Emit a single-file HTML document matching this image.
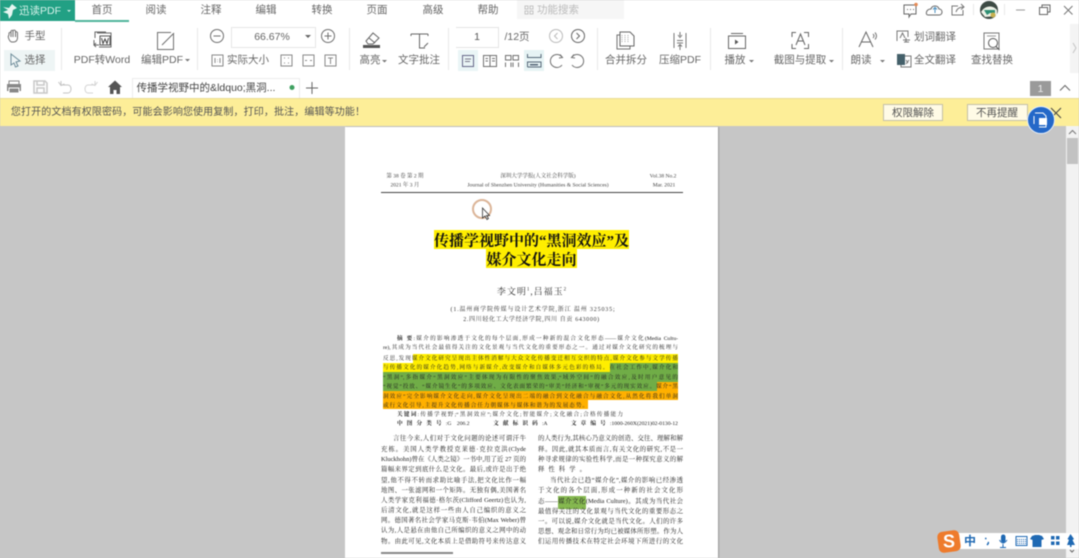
<!DOCTYPE html>
<html lang="zh"><head><meta charset="utf-8"><title>迅读PDF</title>
<style>
html,body{margin:0;padding:0;width:1079px;height:558px;overflow:hidden;background:#c6c6c6}
#w{position:absolute;left:0;top:0;width:1079px;height:558px;overflow:hidden;background:#c6c6c6;filter:blur(.45px);font-family:"Liberation Sans","Noto Sans CJK SC",sans-serif}
.b{position:absolute}
.t{position:absolute;white-space:nowrap;transform:translate(-50%,-50%);font-size:10.5px;color:#666;line-height:1}
.l{position:absolute;font-family:"Liberation Serif","Noto Serif CJK SC",serif;white-space:nowrap;overflow:hidden;text-align:justify;text-align-last:justify;color:#222;line-height:10px;height:10px}
.a{font-size:5.6px}
.c{font-size:6.4px}
.h{position:absolute;white-space:nowrap;transform:translate(-50%,-50%);font-family:"Liberation Serif","Noto Serif CJK SC",serif;color:#444;font-size:5.5px;line-height:1}
svg{position:absolute;left:0;top:0}
</style></head><body><div id="w">
<!-- chrome backgrounds -->
<div class="b" style="left:0;top:0;width:1079px;height:98px;background:#fff"></div>
<div class="b" style="left:0;top:0;width:75px;height:21px;background:#22a084"></div>
<div class="b" style="left:75px;top:20px;width:54px;height:2px;background:#4fb49c"></div>
<div class="b" style="left:517px;top:0;width:107px;height:19px;background:#f6f6f6"></div>
<div class="b" style="left:4px;top:50px;width:51px;height:21px;background:#eef5f5"></div>
<div class="b" style="left:458px;top:50px;width:20px;height:21px;background:#eaf5f6"></div>
<div class="b" style="left:524px;top:50px;width:20px;height:21px;background:#e6f3f4"></div>
<div class="b" style="left:1070px;top:24px;width:9px;height:49px;background:#f4f4f4"></div>
<div class="b" style="left:231px;top:27px;width:83px;height:19px;border:1px solid #e6e6e6"></div>
<div class="b" style="left:456px;top:27px;width:42px;height:19px;border-top:1px solid #e4e4e4;border-bottom:1px solid #e4e4e4;border-right:1px solid #e4e4e4"></div>
<div class="b" style="left:132px;top:78px;width:168px;height:20px;background:#fff;border:1px solid #ececec;border-bottom:none;box-sizing:border-box"></div>
<div class="b" style="left:1030px;top:81px;width:21px;height:15px;background:#9a9a9a"></div>
<div class="b" style="left:0;top:98px;width:1079px;height:28px;background:#fdee98;border-top:1px solid #e9dc96;box-sizing:border-box"></div>
<div class="b" style="left:883px;top:104px;width:60px;height:17px;background:#fffbe6;border:1px solid #c4c0a8;box-sizing:border-box"></div>
<div class="b" style="left:967px;top:104px;width:61px;height:17px;background:#fffbe6;border:1px solid #c4c0a8;box-sizing:border-box"></div>

<!-- separators and icons -->
<svg width="1079" height="126" viewBox="0 0 1079 126" fill="none" stroke="#707070" stroke-width="1">
<g stroke="#e8e8e8"><path d="M61.5 28V70M197.5 28V70M349.5 28V70M448.5 28V70M597.5 28V70M710.5 28V70M842.5 28V70M1004.5 4V15M973.5 4V15" /></g>
<!-- logo -->
<path d="M3 7L9 8L12 4L17 8L13 10L12 15L9 19L8 14L3 12L8 10Z" fill="#e6f6f1" stroke="none"/>
<path d="M67 10h4l-2 2z" fill="#cfeee6" stroke="none"/>
<!-- hand -->
<path d="M10 41C8 38 8 36 9 35V33C10 32 11 32 11 33V31C12 30 13 30 13 31V30.5C14 30 15 30 15.5 31V32C16.5 31.5 17.5 32 17.5 33V38C17.5 40 16 42 14 42H11.5Z"/><path d="M11 33V37M13 31V37M15.5 31V37"/>
<!-- arrow -->
<path d="M11 54L20 61L16 62L18 66L15.5 67L14 63L11 65Z" stroke="#6f8d9a"/>
<!-- pdf to word -->
<path d="M97 33H111V47H99" stroke="#666"/><path d="M95 38V32H106M94 40V45H99M96 43L94 45L96 47" stroke="#666"/>
<rect x="100" y="36" width="10" height="9" fill="#fff" stroke="#555"/>
<path d="M101.5 38L103 43.5L105 39L107 43.5L108.5 38" stroke="#444"/>
<!-- edit pdf -->
<path d="M173.5 34V49.5H157.5V32.5H171M162 45L174 33"/>
<path d="M185 59h5l-2.5 2.5z" fill="#777" stroke="none"/>
<!-- zoom -->
<circle cx="217" cy="36" r="6.5"/><path d="M213.5 36H220.5"/>
<circle cx="328" cy="36" r="6.5"/><path d="M324.5 36H331.5M328 32.5V39.5"/>
<path d="M305 35h6l-3 3z" fill="#666" stroke="none"/>
<!-- fit -->
<rect x="212" y="55" width="11" height="11" stroke="#888"/><path d="M215 58V63M220 58V63M217.5 59.5V60M217.5 61.5V62" stroke="#888"/>
<rect x="281" y="55" width="11" height="11" stroke="#888"/><path d="M284 58h1M288 58h1M284 63h1M288 63h1" stroke="#888"/>
<rect x="303" y="55" width="11" height="11" stroke="#888"/><path d="M305 60.5h2M310 60.5h2" stroke="#888"/>
<rect x="325" y="55" width="11" height="11" stroke="#888"/><path d="M328 58H333M330.5 58V64" stroke="#888"/>
<!-- highlight -->
<path d="M366 41L373 33L379 38L373 44H368Z" stroke="#666"/><path d="M369 38L375 43" stroke="#666"/>
<rect x="363" y="45" width="17" height="3" fill="#555" stroke="none"/>
<path d="M382 60h5l-2.5 2.5z" fill="#777" stroke="none"/>
<!-- text note -->
<path d="M411 34H428M419.5 34V48H425M411 34V36M428 34V36M424 47L428 43" stroke="#666"/>
<!-- page prev next -->
<circle cx="556" cy="36" r="6.5" stroke="#bbb"/><path d="M557.5 33L554.5 36L557.5 39" stroke="#bbb"/>
<circle cx="578" cy="36" r="6.5" stroke="#666"/><path d="M576.5 33L579.5 36L576.5 39" stroke="#666"/>
<!-- views -->
<rect x="462.5" y="55.5" width="11" height="11" stroke="#668"/><path d="M465 59H471M465 61.5H470" stroke="#778"/>
<rect x="483.5" y="55.5" width="13" height="11"/><path d="M490 55.5V66.5M485.5 58.5H488M492 58.5H495M485.5 61H488M492 61H495"/>
<path d="M505.5 55.5H511V60H505.5ZM513 55.5H518.5V60H513ZM505.5 62.5V67M511 62.5V67M513 62.5V67M518.5 62.5V67"/>
<path d="M527.5 54V57.5H541V54M527.5 67V62H541V67H527.5M531 64.5H537" stroke="#567"/><path d="M530 64h8v1.500h-8z" fill="#567" stroke="none"/>
<path d="M562 57A6.5 6.5 0 1 0 562 65"/><path d="M560 54.5L562.5 57.5L559 58"/>
<path d="M572 57A6.5 6.5 0 1 1 572 65"/><path d="M574 54.5L571.5 57.5L575 58"/>
<!-- merge -->
<path d="M620 35H617V49H630V46" /><path d="M620 35V32H630L634 36V46H620Z" stroke="#666"/><path d="M622 35V43M625 35V43M628 35V43" stroke="#aaa" stroke-dasharray="1 1"/>
<!-- compress -->
<path d="M674 33V48M686 33V48M680 32V36M680 45V50M677 40.5H683M677 43H683" stroke="#777"/><path d="M678 35L680 37.5L682 35M678 46.5L680 44.5L682 46.5" stroke="#777"/>
<!-- play -->
<rect x="728.5" y="36" width="17" height="12.5" stroke="#666"/><path d="M731 33.5H743" stroke="#666"/><path d="M735 39.5l3.500 2.500l-3.500 2.500z" fill="#555" stroke="none"/>
<path d="M749 60h5l-2.5 2.500z" fill="#777" stroke="none"/>
<!-- screenshot -->
<path d="M792 37V32.500H796M804 32.500H808.500V37M792 44V48.500H796M804 48.500H808.500V44" stroke="#666"/>
<path d="M796 45L800.500 34L805 45M797.500 41H803.500" stroke="#666"/>
<path d="M829 60h5l-2.500 2.500z" fill="#777" stroke="none"/>
<!-- read aloud -->
<path d="M859 47L866 32L873 47M861.500 42H870.500" stroke="#666"/><path d="M873 34Q875 36 873 38M875 32.500Q878 36 875 39.500" stroke="#777"/>
<path d="M880 60h5l-2.500 2.500z" fill="#777" stroke="none"/>
<!-- translate -->
<path d="M897 41V31H908V37" stroke="#777"/><path d="M900 38L902.500 33L905 38" stroke="#777"/><path d="M906 38V42M903 40H910M904 42H909" stroke="#777"/>
<rect x="897" y="54" width="8" height="11" fill="#44606a" stroke="none"/>
<path d="M905 56H911V67H901V65M906 60L908 63M909 60L906 64" stroke="#777"/>
<!-- find -->
<path d="M984 33H999V49H984Z" stroke="#777"/><path d="M987 36H996" stroke="#999"/><circle cx="993" cy="43" r="4.500" stroke="#555"/><path d="M996 46.500L999.500 50" stroke="#555"/>
<path d="M1073 43L1076 48L1073 53" stroke="#c4c4c4"/>
<!-- top right -->
<path d="M904 5H916V14H911L909 17V14H904Z" stroke="#666"/><path d="M907 9.500h1M910 9.500h1M913 9.500h1" stroke="#666"/><circle cx="916" cy="4.500" r="1.800" fill="#e58a55" stroke="none"/>
<path d="M928 15H939C943 15 943 9 939 9C938 5 932 5 931 9C926 9 925 15 928 15Z" stroke="#666"/><path d="M935 13V8M933 9.500L935 7.500L937 9.500" stroke="#4a90c0"/>
<path d="M958 6H952V15H963V10M956 12C957 8 960 7 964 7M961 4L964 7L961 9.500" stroke="#777"/>
<path d="M1016 10H1025" stroke="#999"/>
<rect x="1039.500" y="7.500" width="8" height="7" stroke="#666"/><path d="M1042 7V5H1050V12H1048" stroke="#666"/>
<path d="M1064 6L1072.500 14.500M1072.500 6L1064 14.500" stroke="#777"/>
<circle cx="989" cy="10" r="9" fill="#3d4a44" stroke="none"/><path d="M981 12C985 5 993 5 997 10L997 16L985 17Z" fill="#eef2e8" stroke="none"/><path d="M984 10H995V13H990L987 15Z" fill="#2f8f74" stroke="none"/><circle cx="993" cy="15" r="2.500" fill="#c7b04f" stroke="none"/>
<!-- second row -->
<path d="M9 84V81H19V84" stroke="#888"/><rect x="7" y="84" width="14" height="7" fill="#888" stroke="none"/><rect x="9" y="88" width="10" height="5" fill="#888" stroke="#fff"/>
<path d="M34 81H45L47 83V93H34ZM37 81V85H44V81M37 93V88H44V93" stroke="#c8c8c8" stroke-width="1.500"/>
<path d="M61 81V85H68C72 85 72 93 68 93H63M58.500 82L61 85.500L64.500 84" stroke="#c4c4c4"/>
<path d="M95 81V85H88C84 85 84 93 88 93H93M97.500 82L95 85.500L91.500 84" stroke="#d4d4d4"/>
<path d="M115 80.500L122 87H120V94H116.500V90H113.500V94H110V87H108Z" fill="#555" stroke="none"/>
<path d="M306 88H318M312 82V94" stroke="#666"/>
<path d="M1060 90.500L1065 85.500L1070 90.500" stroke="#666"/>
<circle cx="292" cy="87.500" r="2.500" fill="#3fa060" stroke="none"/>
<path d="M1051 108L1061 118M1061 108L1051 118" stroke="#444"/>
<!-- search icon -->
<path d="M525 6h3v3h-3zM530 6h3v3h-3zM525 11h3v3h-3zM530 11h3v3h-3z" stroke="#c4c4c4"/>
</svg>

<!-- tabs -->
<span class="t" style="left:40px;top:10.500px;font-size:10.500px;color:#d8f3eb">迅读PDF</span>
<span class="t" style="left:102px;top:10px">首页</span>
<span class="t" style="left:156px;top:10px">阅读</span>
<span class="t" style="left:211px;top:10px">注释</span>
<span class="t" style="left:266px;top:10px">编辑</span>
<span class="t" style="left:322px;top:10px">转换</span>
<span class="t" style="left:377px;top:10px">页面</span>
<span class="t" style="left:433px;top:10px">高级</span>
<span class="t" style="left:488px;top:10px">帮助</span>
<span class="t" style="left:558px;top:10px;color:#bbb">功能搜索</span>
<!-- ribbon labels -->
<span class="t" style="left:35px;top:36px">手型</span>
<span class="t" style="left:35px;top:60px">选择</span>
<span class="t" style="left:102px;top:60px">PDF转Word</span>
<span class="t" style="left:162px;top:60px">编辑PDF</span>
<span class="t" style="left:272px;top:37px;font-size:10.500px">66.67%</span>
<span class="t" style="left:248px;top:60px">实际大小</span>
<span class="t" style="left:370px;top:60px">高亮</span>
<span class="t" style="left:419px;top:60px">文字批注</span>
<span class="t" style="left:477px;top:36.500px;color:#555">1</span>
<span class="t" style="left:517px;top:37px">/12页</span>
<span class="t" style="left:626px;top:60px">合并拆分</span>
<span class="t" style="left:680px;top:60px">压缩PDF</span>
<span class="t" style="left:735px;top:60px">播放</span>
<span class="t" style="left:800px;top:60px">截图与提取</span>
<span class="t" style="left:861px;top:60px">朗读</span>
<span class="t" style="left:935px;top:37px">划词翻译</span>
<span class="t" style="left:935px;top:60px">全文翻译</span>
<span class="t" style="left:992px;top:60px">查找替换</span>
<span class="t" style="left:206px;top:88px;font-size:10.500px;color:#444">传播学视野中的&amp;ldquo;黑洞...</span>
<span class="t" style="left:1040.500px;top:88.500px;color:#eee">1</span>
<span class="t" style="left:188px;top:113px;font-size:10px;letter-spacing:.12px;color:#555">您打开的文档有权限密码，可能会影响您使用复制，打印，批注，编辑等功能！</span>
<span class="t" style="left:913px;top:113px;color:#555">权限解除</span>
<span class="t" style="left:997px;top:113px;color:#555">不再提醒</span>

<!-- blue float -->
<div class="b" style="left:1027px;top:106px;width:28px;height:28px;border-radius:50%;background:#2468c8;border:1.500px solid #e8f0fa;box-sizing:border-box"></div>
<svg width="1079" height="140" viewBox="0 0 1079 140" fill="none" stroke="#fff"><path d="M1035 113H1043L1046 116V127H1039"/><rect x="1039" y="118" width="8" height="7" fill="#fff" stroke="none"/><path d="M1034 116V124"/></svg>

<!-- scrollbar -->
<div class="b" style="left:1066px;top:126px;width:13px;height:432px;background:#f2f2f2"></div>
<div class="b" style="left:1067px;top:138px;width:11px;height:26px;background:#c2c2c2"></div>
<svg width="1079" height="140" viewBox="0 0 1079 140" fill="none" stroke="#777"><path d="M1069 134L1072.500 130.500L1076 134"/></svg>

<!-- PDF page -->
<div class="b" style="left:345px;top:127px;width:373px;height:431px;background:#fff;box-shadow:1px 0 1px #999"></div>
<span class="h" style="left:405px;top:177px">第 38 卷 第 2 期</span>
<span class="h" style="left:405px;top:186px">2021 年 3 月</span>
<span class="h" style="left:538px;top:177px">深圳大学学报(人文社会科学版)</span>
<span class="h" style="left:538px;top:186px;font-size:5.500px">Journal of Shenzhen University (Humanities &amp; Social Sciences)</span>
<span class="h" style="left:663px;top:177px">Vol.38 No.2</span>
<span class="h" style="left:664px;top:186px">Mar. 2021</span>
<div class="b" style="left:381px;top:192px;width:302px;height:1px;background:#444"></div>

<div class="b" style="left:434px;top:230px;width:195px;height:19px;background:#ffee00"></div>
<div class="b" style="left:486px;top:249px;width:91px;height:19px;background:#ffee00"></div>
<span class="t" style="left:531.500px;top:239.500px;font:bold 15px 'Liberation Serif','Noto Serif CJK SC',serif;color:#111">传播学视野中的“黑洞效应”及</span>
<span class="t" style="left:531.500px;top:258.500px;font:bold 15px 'Liberation Serif','Noto Serif CJK SC',serif;color:#111">媒介文化走向</span>
<span class="t" style="left:532px;top:291px;font:9px 'Liberation Serif','Noto Serif CJK SC',serif;color:#333;letter-spacing:1px">李文明<sup style="font-size:5px">1</sup>,吕福玉<sup style="font-size:5px">2</sup></span>
<span class="h" style="left:533px;top:310px;font-size:6px;color:#333;letter-spacing:.85px">(1.温州商学院传媒与设计艺术学院,浙江 温州 325035;</span>
<span class="h" style="left:531.500px;top:320px;font-size:6px;color:#333;letter-spacing:.65px">2.四川轻化工大学经济学院,四川 自贡 643000)</span>

<!-- highlights -->
<div class="b" style="left:413px;top:354px;width:265px;height:9px;background:#ffee00"></div>
<div class="b" style="left:383px;top:363px;width:227px;height:9px;background:#ffee00"></div>
<div class="b" style="left:610px;top:363px;width:68px;height:9px;background:#70ad47"></div>
<div class="b" style="left:383px;top:372px;width:295px;height:10px;background:#70ad47"></div>
<div class="b" style="left:383px;top:382px;width:274px;height:9px;background:#70ad47"></div>
<div class="b" style="left:657px;top:382px;width:21px;height:9px;background:#ffb000"></div>
<div class="b" style="left:383px;top:391px;width:295px;height:9px;background:#ffb000"></div>
<div class="b" style="left:383px;top:400px;width:205px;height:9px;background:#ffb000"></div>
<div class="b" style="left:558px;top:496px;width:28px;height:13px;background:#85b84f"></div>

<!-- abstract -->
<div class="l a" style="left:397px;top:334px;width:281px"><b>摘 要</b>:媒介的影响渗透于文化的每个层面,形成一种新的混合文化形态——媒介文化(Media Cultu-</div>
<div class="l a" style="left:383px;top:343px;width:295px">re),其成为当代社会最值得关注的文化景观与当代文化的重要形态之一。通过对媒介文化研究的梳理与</div>
<div class="l a" style="left:383px;top:354px;width:295px">反思,发现媒介文化研究呈现出主体性消解与大众文化传播变迁相互交织的特点,媒介文化参与文学传播</div>
<div class="l a" style="left:383px;top:363px;width:295px">与传播文化的媒介化趋势,网络与新媒介,改变媒介和自媒体多元色彩的格局。在社会工作中,媒介化和</div>
<div class="l a" style="left:383px;top:373px;width:295px">“黑洞”,多指媒介“黑洞效应”主要体现为有限性的聚焦效果,“域外空间”的融合效应,及时用户意见的</div>
<div class="l a" style="left:383px;top:382px;width:295px">“视觉”投放、“媒介镜生化”的多项效应、文化表面繁荣的“审美”经济和“审视”多元的现实效应。媒介“黑</div>
<div class="l a" style="left:383px;top:392px;width:295px">洞效应”完全影响媒介文化走向,媒介文化呈现出二端的融合到文化融合与融合文化,从然化将我们单洞</div>
<div class="l a" style="left:383px;top:401px;width:205px">或行文化引导,主提升文化传播合任力朝媒体与媒体和谐为的发展态势。</div>
<div class="l a" style="left:397px;top:410px;width:226px"><b>关键词</b>:传播学视野;“黑洞效应”;媒介文化;智能媒介;文化融合;合格传播能力</div>
<div class="l a" style="left:397px;top:419px;width:281px"><b>中图分类号</b>:G 206.2　　<b>文献标识码</b>:A　　<b>文章编号</b>:1000-260X(2021)02-0130-12</div>

<!-- columns left -->
<div class="l c" style="left:393px;top:434px;width:133px">言往今来,人们对于文化问题的论述可谓汗牛</div>
<div class="l c" style="left:381px;top:445px;width:145px">充栋。美国人类学教授克莱德·克拉克洪(Clyde</div>
<div class="l c" style="left:381px;top:455px;width:145px">Kluckhohn)曾在《人类之镜》一书中,用了近 27 页的</div>
<div class="l c" style="left:381px;top:465px;width:145px">篇幅来界定到底什么是文化。最后,或许是出于绝</div>
<div class="l c" style="left:381px;top:476px;width:145px">望,他不得不转而求助比喻手法,把文化比作一幅</div>
<div class="l c" style="left:381px;top:486px;width:145px">地图、一张滤网和一个矩阵。无独有偶,美国著名</div>
<div class="l c" style="left:381px;top:496px;width:145px">人类学家克利福德·格尔茨(Clifford Geertz)也认为,</div>
<div class="l c" style="left:381px;top:506px;width:145px">后清文化,就是这样一些由人自己编织的意义之</div>
<div class="l c" style="left:381px;top:516px;width:145px">网。德国著名社会学家马克斯·韦伯(Max Weber)曾</div>
<div class="l c" style="left:381px;top:526px;width:145px">认为,人是悬在由他自己所编织的意义之网中的动</div>
<div class="l c" style="left:381px;top:537px;width:145px">物。由此可见,文化本质上是借助符号来传达意义</div>
<!-- columns right -->
<div class="l c" style="left:538px;top:434px;width:145px">的人类行为,其核心乃意义的创造、交往、理解和解</div>
<div class="l c" style="left:538px;top:445px;width:145px">释。因此,就其本质而言,有关文化的研究,不是一</div>
<div class="l c" style="left:538px;top:455px;width:145px">种寻求规律的实验性科学,而是一种探究意义的解</div>
<div class="l c" style="left:538px;top:465px;width:48px">释性科学。</div>
<div class="l c" style="left:550px;top:476px;width:133px">当代社会已趋“媒介化”,媒介的影响已经渗透</div>
<div class="l c" style="left:538px;top:486px;width:145px">于文化的各个层面,形成一种新的社会文化形</div>
<div class="l c" style="left:538px;top:497px;width:145px">态——媒介文化(Media Culture)。其成为当代社会</div>
<div class="l c" style="left:538px;top:507px;width:145px">最值得关注的文化景观与当代文化的重要形态之</div>
<div class="l c" style="left:538px;top:517px;width:145px">一。可以说,媒介文化就是当代文化。人们的许多</div>
<div class="l c" style="left:538px;top:527px;width:145px">思想、观念和日常行为均已被媒体所形塑。作为人</div>
<div class="l c" style="left:538px;top:537px;width:145px">们运用传播技术在特定社会环境下所进行的文化</div>
<div class="b" style="left:381px;top:552px;width:72px;height:2px;background:#888"></div>

<!-- cursor circle -->
<svg width="1079" height="558" viewBox="0 0 1079 558" fill="none">
<circle cx="482" cy="209" r="9" stroke="#dcb598" stroke-width="2"/>
<path d="M482.500 208V218L485 216L487 219.500L488.500 218.500L486.500 215.500H489.500Z" fill="#fff" stroke="#333" stroke-width=".8"/>
</svg>

<!-- IME -->
<div class="b" style="left:958px;top:533px;width:121px;height:16px;background:#fff"></div>
<div class="b" style="left:938px;top:531px;width:22px;height:21px;background:#ee7b2c;border-radius:5px;transform:rotate(-8deg)"></div>
<span class="t" style="left:949px;top:541.500px;font:bold 18px 'Liberation Sans',sans-serif;color:#fff">S</span>
<span class="t" style="left:970px;top:541px;font-size:12px;font-weight:bold;color:#1f69b3">中</span>
<svg width="1079" height="558" viewBox="0 0 1079 558" fill="none" stroke="#1f69b3">
<path d="M985 538.500h1.500M988 542q1 1 -1 3" stroke-width="1.500"/>
<rect x="1001.500" y="535" width="3.500" height="7" rx="1.700" fill="#1f69b3"/><path d="M999.500 540Q1003 546 1007 540M1003 544V547M1000 547.500H1006"/>
<rect x="1016" y="536.500" width="11" height="9"/><path d="M1017 539.500H1026M1017 541.500H1026M1017 543.500H1026" stroke-dasharray="1 1"/>
<path d="M1032 536L1035 535H1039L1042 536L1044 539L1041.500 540V547H1032.500V540L1030 539Z" fill="#1f69b3" stroke="none"/>
<path d="M1051 536h3.500v3.500h-3.500zM1056 536h3.500v3.500h-3.500zM1051 541.500h3.500v3.500h-3.500zM1056 541.500h3.500v3.500h-3.500z" fill="#1f69b3" stroke="none"/>
<path d="M1070.500 534L1074 539L1072.500 540L1075 545H1071.500V547H1070V545H1067L1069 540L1067.500 539Z" fill="#1f69b3" stroke="none"/>
<path d="M1070 550L1072 552L1074 550" stroke="#666"/>
</svg>
</div></body></html>
